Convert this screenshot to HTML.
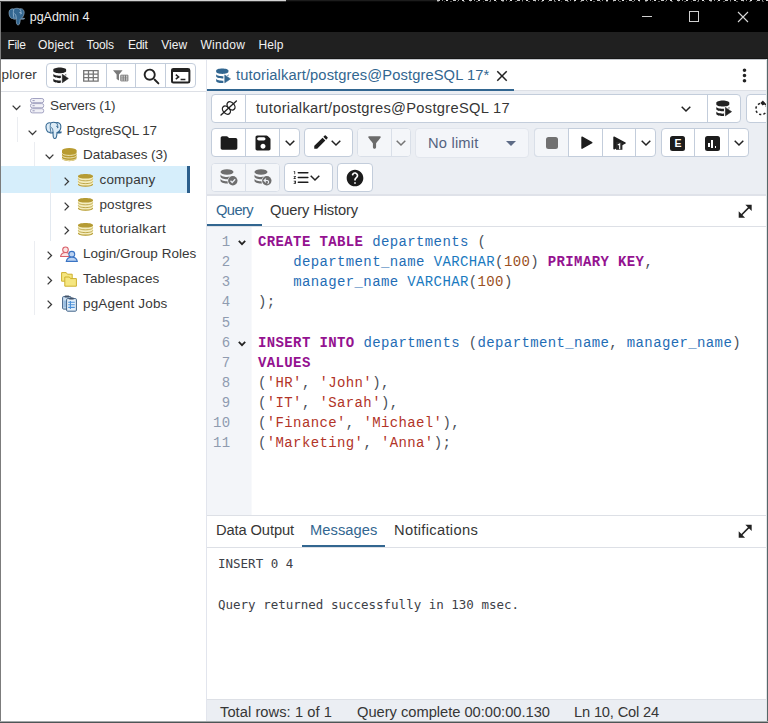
<!DOCTYPE html>
<html lang="en"><head><meta charset="utf-8"><title>pgAdmin 4</title>
<style>
html,body{margin:0;padding:0}
body{width:768px;height:723px;position:relative;overflow:hidden;background:#fff;font-family:"Liberation Sans",sans-serif}
.b{position:absolute;box-sizing:border-box}
.t{position:absolute;white-space:pre;display:block}
.ic{position:absolute;display:block;overflow:visible}
.btn{border:1px solid #c3cddb;background:#fff}
.dis{background:#ebeef3}
.code{position:absolute;white-space:pre;display:block;font-family:"Liberation Mono",monospace}
.k{color:#941290;font-weight:700}
.v{color:#1f6db5}
.n{color:#9a4f22}
.s{color:#b23428}
.p{color:#4a4f58}
.ty{color:#1a7ac0}

</style></head>
<body>
<div class="b" style="left:0px;top:0px;width:768px;height:1px;background:#d4d4d4"></div>
<div class="b" style="left:0px;top:1px;width:768px;height:1px;background:#3c3c3c"></div>
<div class="b" style="left:286px;top:0px;width:151px;height:1px;background:#1c1c1c"></div>
<div class="b" style="left:286px;top:1px;width:151px;height:1px;background:#080808"></div>
<div class="b" style="left:437px;top:0px;width:331px;height:2px;background:#000"></div>
<div class="b" style="left:437px;top:0px;width:331px;height:1px;background:repeating-linear-gradient(90deg,#c8c8c8 0 3px,#000 3px 5px,#999 5px 6px,#000 6px 9px,#ddd 9px 11px,#000 11px 16px)"></div>
<div class="b" style="left:437px;top:1px;width:331px;height:1px;background:repeating-linear-gradient(90deg,#555 0 2px,#000 2px 7px,#444 7px 8px,#000 8px 13px)"></div>
<div class="b" style="left:0px;top:2px;width:768px;height:30px;background:#000"></div>
<div class="b" style="left:0px;top:32px;width:768px;height:27px;background:#202020"></div>
<div class="b" style="left:0px;top:58px;width:768px;height:1px;background:#161616"></div>
<div class="b" style="left:1px;top:59px;width:766px;height:1px;background:#c4c7cb;z-index:40"></div>
<div class="b" style="left:0px;top:2px;width:1px;height:721px;background:#7c7c7c;z-index:50"></div>
<div class="b" style="left:766px;top:59px;width:1px;height:664px;background:#e3e6e7;z-index:50"></div>
<div class="b" style="left:767px;top:59px;width:1px;height:664px;background:#56676a;z-index:50"></div>
<div class="b" style="left:0px;top:721px;width:768px;height:1px;background:#a4a9aa;z-index:51"></div>
<div class="b" style="left:0px;top:722px;width:768px;height:1px;background:#4d5556;z-index:51"></div>
<svg class="ic" style="left:8px;top:8px;width:17px;height:17.3px" viewBox="0 0 17 17.300"><path fill="#336791" stroke="#9fb9cf" stroke-width=".600" d="M1 4.500C1 1.500 3.500.300 5.800 1 7.500.100 10 .100 11.500.800 13.500.200 16 1.200 16.200 4c.200 2.500-1.200 5.300-2.700 6.200l3 .100-.200.700c-1.500.400-3 .400-4 0-.100 2-.300 4-1 5.300-.800 1-2.300.700-2.700-.500-.400-1.500-.300-3.500-.400-5-1.200.700-2.700.500-3.700-.300C2.500 10.800 1 8 1 4.500z"/><path fill="none" stroke="#a9c6de" stroke-width=".700" d="M5.800 1.200C5 4 5.300 8 6.100 10.400M8.200 10.800c0-2.800-.500-4.600-1.800-5.200M11.300 4.600c1-.600 2.200-.100 2 1.300M11.500.900c1.500 1 2 3.500 1.200 5.500"/></svg>
<span class="t" style="left:29.7px;top:8px;font-size:12.5px;line-height:18px;color:#eee;font-family:'Liberation Sans', sans-serif;letter-spacing:-0.01px;">pgAdmin 4</span>
<div class="b" style="left:641.5px;top:16px;width:10.0px;height:1px;background:#d0d0d0"></div>
<div class="b" style="left:689px;top:11px;width:10px;height:10.5px;border:1px solid #d0d0d0"></div>
<svg class="ic" style="left:737.5px;top:11.5px;width:10px;height:10px" viewBox="0 0 10 10"><path d="M0 0L10 10M10 0L0 10" stroke="#d8d8d8" stroke-width="1.100" fill="none"/></svg>
<span class="t" style="left:7.4px;top:36.5px;font-size:12px;line-height:17px;color:#f2f2f2;font-family:'Liberation Sans', sans-serif;letter-spacing:-0.29px;">File</span>
<span class="t" style="left:38px;top:36.5px;font-size:12px;line-height:17px;color:#f2f2f2;font-family:'Liberation Sans', sans-serif;letter-spacing:0.19px;">Object</span>
<span class="t" style="left:86.5px;top:36.5px;font-size:12px;line-height:17px;color:#f2f2f2;font-family:'Liberation Sans', sans-serif;letter-spacing:-0.10px;">Tools</span>
<span class="t" style="left:128px;top:36.5px;font-size:12px;line-height:17px;color:#f2f2f2;font-family:'Liberation Sans', sans-serif;letter-spacing:-0.30px;">Edit</span>
<span class="t" style="left:161.3px;top:36.5px;font-size:12px;line-height:17px;color:#f2f2f2;font-family:'Liberation Sans', sans-serif;">View</span>
<span class="t" style="left:200.4px;top:36.5px;font-size:12px;line-height:17px;color:#f2f2f2;font-family:'Liberation Sans', sans-serif;letter-spacing:0.37px;">Window</span>
<span class="t" style="left:258.4px;top:36.5px;font-size:12px;line-height:17px;color:#f2f2f2;font-family:'Liberation Sans', sans-serif;letter-spacing:0.08px;">Help</span>
<div class="b" style="left:1px;top:59px;width:206px;height:664px;background:#fff"></div>
<div class="b" style="left:1px;top:91px;width:206px;height:1px;background:#dde0e6"></div>
<div class="b" style="left:206px;top:59px;width:1px;height:664px;background:#e2e5ed"></div>
<span class="t" style="left:1.5px;top:65px;font-size:13.5px;line-height:19px;color:#363636;font-family:'Liberation Sans', sans-serif;letter-spacing:0.16px;">plorer</span>
<div class="b" style="left:46px;top:63px;width:150px;height:25px;border:1px solid #c3cddb;border-radius:4px;background:#fff"></div>
<div class="b" style="left:76px;top:64px;width:1px;height:23px;background:#c3cddb"></div>
<div class="b" style="left:106px;top:64px;width:1px;height:23px;background:#c3cddb"></div>
<div class="b" style="left:135px;top:64px;width:1px;height:23px;background:#c3cddb"></div>
<div class="b" style="left:165px;top:64px;width:1px;height:23px;background:#c3cddb"></div>
<svg class="ic" style="left:51px;top:65.8px;width:18.2px;height:18.2px" viewBox="0 0 24 24"><path fill="#222" d="M3 5v1.700c0 1.700 3.800 3 8.500 3s8.500-1.300 8.500-3V5c0-1.700-3.800-3-8.500-3S3 3.300 3 5z"/><path fill="#222" d="M3 9.800v3.200c0 1.700 3.800 3 8.500 3 .500 0 1 0 1.500-.050v-3.200c-.500.030-1 .050-1.500.050-4.700 0-8.500-1.300-8.500-3z"/><path fill="#222" d="M3 16.100v3.200c0 1.700 3.800 3 8.500 3 .500 0 1 0 1.500-.050v-3.200c-.500.030-1 .050-1.500.050-4.700 0-8.500-1.300-8.500-3z"/><path fill="#222" d="M20 9.800c0 .700-.700 1.400-1.800 1.900l1.800 1.100z"/><path fill="#222" stroke="#222" stroke-width=".800" stroke-linejoin="round" d="M14.900 11v11l8-5.500z"/></svg>
<svg class="ic" style="left:83.3px;top:70px;width:15.8px;height:11.8px" viewBox="0 0 15.800 11.800"><path fill="none" stroke="#757575" stroke-width="1.300" d="M.700 .700h14.400v10.400H.700zM.700 4.200h14.400M.700 7.600h14.400M5.500 .700v10.400M10.300 .700v10.400"/></svg>
<svg class="ic" style="left:113.3px;top:70.4px;width:15.4px;height:11.4px" viewBox="0 0 15.400 11.400"><path fill="#7a7a7a" d="M0 .200h9.600L6 4.600v5.800L3.600 9V4.600z"/><path fill="none" stroke="#7a7a7a" stroke-width="1" d="M7.800 5.200h7.100v5.700H7.800zM7.800 7.100h7.100M7.800 9h7.100M10.200 5.200v5.700M12.500 5.200v5.700"/></svg>
<svg class="ic" style="left:140.7px;top:65.8px;width:22px;height:22px" viewBox="0 0 24 24"><path fill="#222" d="M15.5 14h-.79l-.28-.27c1.2-1.4 1.820-3.310 1.480-5.340-.47-2.780-2.790-5-5.590-5.340-4.230-.520-7.790 3.040-7.270 7.270.34 2.800 2.560 5.120 5.340 5.590 2.030.34 3.940-.28 5.340-1.480l.27.28v.79l4.250 4.250c.41.410 1.080.410 1.490 0 .41-.410.410-1.080 0-1.490L15.500 14zm-6 0C7.010 14 5 11.990 5 9.500S7.010 5 9.500 5 14 7.010 14 9.500 11.990 14 9.500 14z"/></svg>
<svg class="ic" style="left:171px;top:68px;width:19.4px;height:15.4px" viewBox="0 0 19.400 15.400"><rect x="1" y="1" width="17.400" height="13.400" rx="1.500" fill="none" stroke="#222" stroke-width="2"/><path d="M1 1h17.400v3H1z" fill="#222"/><path d="M4.800 6.700l2.800 2.200-2.800 2.200M9.600 11.600h4.800" fill="none" stroke="#222" stroke-width="1.500"/></svg>
<div class="b" style="left:1px;top:166px;width:189px;height:27px;background:#d6eefb"></div>
<div class="b" style="left:187px;top:166px;width:3px;height:27px;background:#2c5f8c"></div>
<div class="b" style="left:17px;top:117px;width:1px;height:25px;background:#ebedf1"></div>
<div class="b" style="left:34px;top:142px;width:1px;height:24px;background:#ebedf1"></div>
<div class="b" style="left:34px;top:241px;width:1px;height:74px;background:#ebedf1"></div>
<div class="b" style="left:50px;top:166px;width:1px;height:75px;background:#e3e9f0"></div>
<svg class="ic" style="left:12.0px;top:104.8px;width:9.0px;height:5.58px" viewBox="0 0 10 6.200"><path d="M.700 .700L5 5 9.300 .700" fill="none" stroke="#3a3a3a" stroke-width="1.45"/></svg>
<svg class="ic" style="left:29.7px;top:98.0px;width:14.2px;height:15.4px" viewBox="0 0 14.200 15.400"><g fill="#f1f1f7" stroke="#a3a3c2" stroke-width="1"><rect x=".500" y=".500" width="13.200" height="4.200" rx="1.800"/><rect x=".500" y="5.600" width="13.200" height="4.200" rx="1.800"/><rect x=".500" y="10.700" width="13.200" height="4.200" rx="1.800"/></g><path d="M2.500 2.600h2.200M2.500 7.700h2.200M2.500 12.800h2.200" stroke="#8f8fb3" stroke-width=".900"/></svg>
<span class="t" style="left:50px;top:95.9px;font-size:13.5px;line-height:19px;color:#383838;font-family:'Liberation Sans', sans-serif;letter-spacing:-0.12px;">Servers (1)</span>
<svg class="ic" style="left:28.2px;top:129.5px;width:9.0px;height:5.58px" viewBox="0 0 10 6.200"><path d="M.700 .700L5 5 9.300 .700" fill="none" stroke="#3a3a3a" stroke-width="1.45"/></svg>
<svg class="ic" style="left:44.5px;top:121.6px;width:16.6px;height:16.9px" viewBox="0 0 17 17.300"><path fill="#dcebf6" stroke="#336791" stroke-width="1.100" d="M1 4.500C1 1.500 3.500.300 5.800 1 7.500.100 10 .100 11.500.800 13.500.200 16 1.200 16.200 4c.200 2.500-1.200 5.300-2.700 6.200l3 .100-.200.700c-1.500.400-3 .400-4 0-.100 2-.300 4-1 5.300-.800 1-2.300.700-2.700-.500-.400-1.500-.300-3.500-.400-5-1.200.700-2.700.500-3.700-.300C2.500 10.800 1 8 1 4.500z"/><path fill="none" stroke="#336791" stroke-width=".900" d="M5.800 1.200C5 4 5.300 8 6.100 10.400M8.200 10.800c0-2.800-.500-4.600-1.800-5.200M11.300 4.600c1-.600 2.200-.100 2 1.300M11.500.900c1.500 1 2 3.500 1.200 5.500"/></svg>
<span class="t" style="left:66.5px;top:120.6px;font-size:13.5px;line-height:19px;color:#383838;font-family:'Liberation Sans', sans-serif;letter-spacing:-0.10px;">PostgreSQL 17</span>
<svg class="ic" style="left:44.5px;top:154.2px;width:9.0px;height:5.58px" viewBox="0 0 10 6.200"><path d="M.700 .700L5 5 9.300 .700" fill="none" stroke="#3a3a3a" stroke-width="1.45"/></svg>
<svg class="ic" style="left:62px;top:148.20000000000002px;width:14.6px;height:13.2px" viewBox="0 0 14.600 13.200"><path fill="#b89b30" d="M0 2.600v8C0 12.100 3.300 13.200 7.300 13.200s7.300-1.100 7.300-2.600v-8z"/><ellipse cx="7.300" cy="2.700" rx="7.300" ry="2.700" fill="#b89b30"/><path fill="none" stroke="#f4edc4" stroke-width=".900" d="M0 5c0 1.400 3.300 2.400 7.300 2.400S14.600 6.400 14.600 5M0 7.500c0 1.400 3.300 2.400 7.300 2.400s7.300-1 7.300-2.400M0 10c0 1.400 3.300 2.400 7.300 2.400s7.300-1 7.300-2.400"/></svg>
<span class="t" style="left:83px;top:145.3px;font-size:13.5px;line-height:19px;color:#383838;font-family:'Liberation Sans', sans-serif;letter-spacing:-0.02px;">Databases (3)</span>
<svg class="ic" style="left:63.6px;top:176.8px;width:5.58px;height:9.0px" viewBox="0 0 6.200 10"><path d="M.700 .700L5 5 .700 9.300" fill="none" stroke="#3a3a3a" stroke-width="1.45"/></svg>
<svg class="ic" style="left:78.3px;top:173.5px;width:15px;height:13px" viewBox="0 0 15 13"><path fill="#f4edbf" d="M0 2.300v7.800c0 1.500 3.400 2.600 7.500 2.600s7.500-1.100 7.500-2.600V2.300z"/><path fill="#b59b34" d="M0 2.100v.300c0 1.200 3.400 2.100 7.500 2.100s7.500-.900 7.500-2.100v-.300C15 .900 11.600 0 7.500 0S0 .900 0 2.100z"/><path fill="none" stroke="#b59b34" stroke-width=".850" d="M.300 4.700c0 1.200 3.300 2.100 7.200 2.100s7.200-.900 7.200-2.100M.300 7.500c0 1.200 3.300 2.100 7.200 2.100s7.200-.900 7.200-2.100"/><path fill="none" stroke="#b59b34" stroke-width="1.200" d="M.500 10c0 1.200 3.100 2.100 7 2.100s7-.900 7-2.100"/></svg>
<span class="t" style="left:99.5px;top:170px;font-size:13.5px;line-height:19px;color:#383838;font-family:'Liberation Sans', sans-serif;letter-spacing:0.17px;">company</span>
<svg class="ic" style="left:63.6px;top:201.5px;width:5.58px;height:9.0px" viewBox="0 0 6.200 10"><path d="M.700 .700L5 5 .700 9.300" fill="none" stroke="#3a3a3a" stroke-width="1.45"/></svg>
<svg class="ic" style="left:78.3px;top:198.2px;width:15px;height:13px" viewBox="0 0 15 13"><path fill="#f4edbf" d="M0 2.300v7.800c0 1.500 3.400 2.600 7.500 2.600s7.500-1.100 7.500-2.600V2.300z"/><path fill="#b59b34" d="M0 2.100v.300c0 1.200 3.400 2.100 7.500 2.100s7.500-.900 7.500-2.100v-.300C15 .900 11.600 0 7.500 0S0 .900 0 2.100z"/><path fill="none" stroke="#b59b34" stroke-width=".850" d="M.300 4.700c0 1.200 3.300 2.100 7.200 2.100s7.200-.900 7.200-2.100M.300 7.500c0 1.200 3.300 2.100 7.200 2.100s7.200-.900 7.200-2.100"/><path fill="none" stroke="#b59b34" stroke-width="1.200" d="M.500 10c0 1.200 3.100 2.100 7 2.100s7-.900 7-2.100"/></svg>
<span class="t" style="left:99.5px;top:194.7px;font-size:13.5px;line-height:19px;color:#383838;font-family:'Liberation Sans', sans-serif;letter-spacing:0.09px;">postgres</span>
<svg class="ic" style="left:63.6px;top:226.2px;width:5.58px;height:9.0px" viewBox="0 0 6.200 10"><path d="M.700 .700L5 5 .700 9.300" fill="none" stroke="#3a3a3a" stroke-width="1.45"/></svg>
<svg class="ic" style="left:78.3px;top:222.9px;width:15px;height:13px" viewBox="0 0 15 13"><path fill="#f4edbf" d="M0 2.300v7.800c0 1.500 3.400 2.600 7.500 2.600s7.500-1.100 7.500-2.600V2.300z"/><path fill="#b59b34" d="M0 2.100v.300c0 1.200 3.400 2.100 7.500 2.100s7.500-.900 7.500-2.100v-.300C15 .900 11.600 0 7.500 0S0 .900 0 2.100z"/><path fill="none" stroke="#b59b34" stroke-width=".850" d="M.300 4.700c0 1.200 3.300 2.100 7.200 2.100s7.200-.900 7.200-2.100M.300 7.500c0 1.200 3.300 2.100 7.200 2.100s7.200-.900 7.200-2.100"/><path fill="none" stroke="#b59b34" stroke-width="1.200" d="M.500 10c0 1.200 3.100 2.100 7 2.100s7-.900 7-2.100"/></svg>
<span class="t" style="left:99.5px;top:219.4px;font-size:13.5px;line-height:19px;color:#383838;font-family:'Liberation Sans', sans-serif;letter-spacing:0.29px;">tutorialkart</span>
<svg class="ic" style="left:47.1px;top:250.9px;width:5.58px;height:9.0px" viewBox="0 0 6.200 10"><path d="M.700 .700L5 5 .700 9.300" fill="none" stroke="#3a3a3a" stroke-width="1.45"/></svg>
<svg class="ic" style="left:60.3px;top:245.7px;width:18px;height:16px" viewBox="0 0 18 16"><circle cx="5.500" cy="3.800" r="2.800" fill="#fbe4e4" stroke="#d9606a" stroke-width="1.100"/><path d="M.600 10.500c.500-3 2.500-4 4.900-4s4.400 1 4.900 4z" fill="#fbe4e4" stroke="#d9606a" stroke-width="1.100"/><circle cx="11.800" cy="8.300" r="2.900" fill="#bcd3f2" stroke="#3a74c4" stroke-width="1.100"/><path d="M6.300 15.400c.500-3.200 2.800-4.300 5.500-4.300s5 1.100 5.500 4.300z" fill="#bcd3f2" stroke="#3a74c4" stroke-width="1.100"/></svg>
<span class="t" style="left:83px;top:244.1px;font-size:13.5px;line-height:19px;color:#383838;font-family:'Liberation Sans', sans-serif;letter-spacing:0.05px;">Login/Group Roles</span>
<svg class="ic" style="left:47.1px;top:275.6px;width:5.58px;height:9.0px" viewBox="0 0 6.200 10"><path d="M.700 .700L5 5 .700 9.300" fill="none" stroke="#3a3a3a" stroke-width="1.45"/></svg>
<svg class="ic" style="left:61.3px;top:270.6px;width:16px;height:16px" viewBox="0 0 16 16"><path d="M.600 1.600h4.600l1.200 1.600h4.800v7H.600z" fill="#f5e680" stroke="#cdb02e" stroke-width="1"/><path d="M3.800 6h4.600l1.200 1.600h5.800v7.600H3.800z" fill="#f5e680" stroke="#cdb02e" stroke-width="1"/></svg>
<span class="t" style="left:83px;top:268.8px;font-size:13.5px;line-height:19px;color:#383838;font-family:'Liberation Sans', sans-serif;letter-spacing:0.13px;">Tablespaces</span>
<svg class="ic" style="left:47.1px;top:300.3px;width:5.58px;height:9.0px" viewBox="0 0 6.200 10"><path d="M.700 .700L5 5 .700 9.300" fill="none" stroke="#3a3a3a" stroke-width="1.45"/></svg>
<svg class="ic" style="left:62px;top:294.5px;width:15px;height:17px" viewBox="0 0 15 17"><rect x=".600" y="1.600" width="8.500" height="12.500" rx="1" fill="#cfe2f3" stroke="#3f6287" stroke-width="1"/><path d="M2.200 5.500v7M3.800 5.500v7" stroke="#6f9fd0" stroke-width=".800"/><rect x="4.600" y="3.600" width="9.800" height="12.600" rx="1" fill="#e4f0fa" stroke="#3f6287" stroke-width="1"/><path d="M6.200 7.200h6.600M6.200 9.800h6.600M6.200 12.400h6.600M8.400 6v8" stroke="#4a90d9" stroke-width="1.100" fill="none"/><rect x="2.700" y=".400" width="4.500" height="2.200" rx=".600" fill="#44546a"/><rect x="7.200" y="2.600" width="4.500" height="2" rx=".600" fill="#44546a"/></svg>
<span class="t" style="left:83px;top:293.5px;font-size:13.5px;line-height:19px;color:#383838;font-family:'Liberation Sans', sans-serif;letter-spacing:0.16px;">pgAgent Jobs</span>
<div class="b" style="left:207px;top:59px;width:559px;height:32px;background:#fff"></div>
<div class="b" style="left:207px;top:89px;width:307px;height:2px;background:#326690"></div>
<div class="b" style="left:514px;top:90px;width:252px;height:1px;background:#dde0e6"></div>
<svg class="ic" style="left:213.9px;top:66.6px;width:17.3px;height:17.3px" viewBox="0 0 24 24"><path fill="#326690" d="M3 5v1.700c0 1.700 3.800 3 8.500 3s8.500-1.300 8.500-3V5c0-1.700-3.800-3-8.500-3S3 3.300 3 5z"/><path fill="#326690" d="M3 9.800v3.200c0 1.700 3.800 3 8.500 3 .500 0 1 0 1.500-.050v-3.200c-.500.030-1 .050-1.500.050-4.700 0-8.500-1.300-8.500-3z"/><path fill="#326690" d="M3 16.100v3.200c0 1.700 3.800 3 8.500 3 .500 0 1 0 1.500-.050v-3.200c-.500.030-1 .050-1.500.050-4.700 0-8.500-1.300-8.500-3z"/><path fill="#326690" d="M20 9.800c0 .700-.700 1.400-1.800 1.900l1.800 1.100z"/><path fill="#326690" stroke="#326690" stroke-width=".800" stroke-linejoin="round" d="M14.900 11v11l8-5.500z"/></svg>
<span class="t" style="left:236px;top:65px;font-size:14.7px;line-height:21px;color:#326690;font-family:'Liberation Sans', sans-serif;letter-spacing:0.11px;">tutorialkart/postgres@PostgreSQL 17*</span>
<svg class="ic" style="left:493px;top:66.5px;width:18px;height:18px" viewBox="0 0 24 24"><path fill="#222" d="M19 6.410 17.590 5 12 10.590 6.410 5 5 6.410 10.590 12 5 17.590 6.410 19 12 13.410 17.590 19 19 17.590 13.410 12z"/></svg>
<svg class="ic" style="left:733.5px;top:65px;width:21px;height:21px" viewBox="0 0 24 24"><path fill="#222" d="M12 8c1.1 0 2-.9 2-2s-.9-2-2-2-2 .9-2 2 .9 2 2 2zm0 2c-1.1 0-2 .9-2 2s.9 2 2 2 2-.9 2-2-.9-2-2-2zm0 6c-1.1 0-2 .9-2 2s.9 2 2 2 2-.9 2-2-.9-2-2-2z"/></svg>
<div class="b" style="left:207px;top:91px;width:559px;height:105px;background:#ebeef3"></div>
<div class="b" style="left:207px;top:194px;width:559px;height:2px;background:#dfe2e9"></div>
<div class="b" style="left:211px;top:94px;width:530px;height:29px;border:1px solid #c3cddb;border-radius:4px;background:#fff"></div>
<div class="b" style="left:245px;top:95px;width:1px;height:27px;background:#c3cddb"></div>
<div class="b" style="left:707px;top:95px;width:1px;height:27px;background:#c3cddb"></div>
<svg class="ic" style="left:219.7px;top:100.3px;width:17.4px;height:16px" viewBox="0 0 17.400 16"><g fill="none" stroke="#222" stroke-width="1.350" stroke-linecap="round"><path d="M1 15L16.400 1"/><ellipse cx="6.400" cy="10.100" rx="3.300" ry="4.700" transform="rotate(-43 6.400 10.100)"/><ellipse cx="11" cy="5.900" rx="3.300" ry="4.700" transform="rotate(-43 11 5.900)"/></g></svg>
<span class="t" style="left:256px;top:98px;font-size:14.7px;line-height:21px;color:#363636;font-family:'Liberation Sans', sans-serif;letter-spacing:0.29px;">tutorialkart/postgres@PostgreSQL 17</span>
<svg class="ic" style="left:680.5px;top:105.5px;width:10.0px;height:6.2px" viewBox="0 0 10 6.200"><path d="M.700 .700L5 5 9.300 .700" fill="none" stroke="#222" stroke-width="1.5"/></svg>
<svg class="ic" style="left:714.3px;top:98.9px;width:18.4px;height:18.4px" viewBox="0 0 24 24"><path fill="#222" d="M3 5v1.700c0 1.700 3.800 3 8.500 3s8.500-1.300 8.500-3V5c0-1.700-3.800-3-8.500-3S3 3.300 3 5z"/><path fill="#222" d="M3 9.800v3.200c0 1.700 3.800 3 8.500 3 .500 0 1 0 1.500-.050v-3.200c-.500.030-1 .050-1.500.050-4.700 0-8.500-1.300-8.500-3z"/><path fill="#222" d="M3 16.100v3.200c0 1.700 3.800 3 8.500 3 .500 0 1 0 1.500-.050v-3.200c-.500.030-1 .050-1.500.050-4.700 0-8.500-1.300-8.500-3z"/><path fill="#222" d="M20 9.800c0 .700-.700 1.400-1.800 1.900l1.800 1.100z"/><path fill="#222" stroke="#222" stroke-width=".800" stroke-linejoin="round" d="M14.900 11v11l8-5.500z"/></svg>
<div class="b" style="left:746px;top:94px;width:29px;height:29px;border:1px solid #c3cddb;border-radius:4px;background:#fff"></div>
<svg class="ic" style="left:754px;top:100px;width:16px;height:17px" viewBox="0 0 16 17"><circle cx="7.500" cy="9" r="5.600" fill="none" stroke="#222" stroke-width="1.500" stroke-dasharray="2.200 2.200"/><path d="M6.300 3l2.600-2.400 2.400 2.600-2.600 2.400z" fill="#222"/><path d="M9.500 3l3.500 2.300" stroke="#222" stroke-width="1.500"/></svg>
<div class="b" style="left:211px;top:128px;width:89px;height:29px;border:1px solid #c3cddb;border-radius:4px;background:#fff"></div>
<div class="b" style="left:245px;top:129px;width:1px;height:27px;background:#c3cddb"></div>
<div class="b" style="left:279px;top:129px;width:1px;height:27px;background:#c3cddb"></div>
<svg class="ic" style="left:218.7px;top:133px;width:20px;height:20px" viewBox="0 0 24 24"><path fill="#1c1c1c" d="M10.59 4.59C10.21 4.21 9.7 4 9.17 4H4c-1.1 0-1.99.9-1.99 2L2 18c0 1.1.9 2 2 2h16c1.1 0 2-.9 2-2V8c0-1.1-.9-2-2-2h-8l-1.41-1.41z"/></svg>
<svg class="ic" style="left:252.5px;top:133px;width:20px;height:20px" viewBox="0 0 24 24"><path fill="#1c1c1c" d="M17.59 3.59c-.38-.38-.89-.59-1.42-.59H5c-1.11 0-2 .9-2 2v14c0 1.1.9 2 2 2h14c1.1 0 2-.9 2-2V7.83c0-.53-.21-1.04-.59-1.41l-2.82-2.83zM12 19c-1.66 0-3-1.34-3-3s1.34-3 3-3 3 1.34 3 3-1.34 3-3 3zm1-10H7c-1.1 0-2-.9-2-2s.9-2 2-2h6c1.1 0 2 .9 2 2s-.9 2-2 2z"/></svg>
<svg class="ic" style="left:284.5px;top:139.9px;width:10.0px;height:6.2px" viewBox="0 0 10 6.200"><path d="M.700 .700L5 5 9.300 .700" fill="none" stroke="#222" stroke-width="1.5"/></svg>
<div class="b" style="left:304px;top:128px;width:49px;height:29px;border:1px solid #c3cddb;border-radius:4px;background:#fff"></div>
<svg class="ic" style="left:312px;top:133px;width:18px;height:18px" viewBox="0 0 24 24"><path fill="#1c1c1c" d="M3 17.46v3.04c0 .28.22.5.5.5h3.04c.13 0 .26-.05.35-.15L17.81 9.94l-3.75-3.75L3.15 17.1c-.1.1-.15.22-.15.36zM20.71 7.04c.39-.39.39-1.02 0-1.41l-2.34-2.34a.996.996 0 0 0-1.41 0l-1.83 1.83 3.75 3.75 1.83-1.830z"/></svg>
<svg class="ic" style="left:330.6px;top:139.9px;width:10.0px;height:6.2px" viewBox="0 0 10 6.200"><path d="M.700 .700L5 5 9.300 .700" fill="none" stroke="#222" stroke-width="1.5"/></svg>
<div class="b" style="left:357px;top:128px;width:54px;height:29px;border:1px solid #d9dfe8;border-radius:4px;background:#fff"></div>
<div class="b" style="left:358px;top:129px;width:33px;height:27px;background:#f4f6f9;border-top-left-radius:3px;border-bottom-left-radius:3px;"></div>
<div class="b" style="left:392px;top:129px;width:18px;height:27px;background:#f4f6f9;border-top-right-radius:3px;border-bottom-right-radius:3px;"></div>
<div class="b" style="left:391px;top:129px;width:1px;height:27px;background:#d9dfe8"></div>
<svg class="ic" style="left:364.5px;top:133px;width:19px;height:19px" viewBox="0 0 24 24"><path fill="#6b6b6b" d="M4.25 5.61C6.57 8.59 10 13 10 13v5c0 1.1.9 2 2 2s2-.9 2-2v-5s3.43-4.41 5.75-7.39c.51-.66.04-1.61-.8-1.61H5.04c-.83 0-1.3.95-.79 1.61z"/></svg>
<svg class="ic" style="left:396.0px;top:139.9px;width:10.0px;height:6.2px" viewBox="0 0 10 6.200"><path d="M.700 .700L5 5 9.300 .700" fill="none" stroke="#757575" stroke-width="1.5"/></svg>
<div class="b" style="left:415px;top:128px;width:114px;height:30px;border:1px solid #e2e6ed;border-radius:4px;background:#f3f5f9"></div>
<span class="t" style="left:428px;top:132.5px;font-size:14.7px;line-height:21px;color:#55637f;font-family:'Liberation Sans', sans-serif;letter-spacing:0.19px;">No limit</span>
<svg class="ic" style="left:506px;top:141px;width:10px;height:5px" viewBox="0 0 10 5"><path d="M0 0h10L5 5z" fill="#5d6b86"/></svg>
<div class="b" style="left:534px;top:128px;width:122px;height:29px;border:1px solid #c3cddb;border-radius:4px;background:#fff"></div>
<div class="b" style="left:535px;top:129px;width:33px;height:27px;background:#f4f6f9;border-top-left-radius:3px;border-bottom-left-radius:3px;"></div>
<div class="b" style="left:568px;top:129px;width:1px;height:27px;background:#c3cddb"></div>
<div class="b" style="left:602px;top:129px;width:1px;height:27px;background:#c3cddb"></div>
<div class="b" style="left:635px;top:129px;width:1px;height:27px;background:#c3cddb"></div>
<div class="b" style="left:534px;top:128px;width:34px;height:29px;border:1px solid #d9dfe8;border-right:none;border-radius:4px 0 0 4px"></div>
<div class="b" style="left:545.5px;top:136.5px;width:12.5px;height:12.5px;background:#717171;border-radius:2.500px"></div>
<svg class="ic" style="left:581px;top:136.3px;width:12px;height:13.4px" viewBox="0 0 12 13.400"><path d="M1 1.200L10.800 6.700 1 12.200z" fill="#1c1c1c" stroke="#1c1c1c" stroke-width="1.400" stroke-linejoin="round"/></svg>
<svg class="ic" style="left:613.3px;top:135.8px;width:13.4px;height:14px" viewBox="0 0 13.400 14"><path d="M1 1.200L12.200 7 1 12.800z" fill="#1c1c1c" stroke="#1c1c1c" stroke-width="1.400" stroke-linejoin="round"/></svg>
<svg class="ic" style="left:615.6px;top:142px;width:6.4px;height:7.8px" viewBox="0 0 6.400 7.800"><rect width="6.400" height="7.800" fill="#2a2a2a"/><path d="M1.800 3l1.900-1.100v5.300" stroke="#fff" stroke-width="1.150" fill="none"/></svg>
<svg class="ic" style="left:641.0px;top:139.9px;width:10.0px;height:6.2px" viewBox="0 0 10 6.200"><path d="M.700 .700L5 5 9.300 .700" fill="none" stroke="#222" stroke-width="1.5"/></svg>
<div class="b" style="left:661px;top:128px;width:88px;height:29px;border:1px solid #c3cddb;border-radius:4px;background:#fff"></div>
<div class="b" style="left:694px;top:129px;width:1px;height:27px;background:#c3cddb"></div>
<div class="b" style="left:728px;top:129px;width:1px;height:27px;background:#c3cddb"></div>
<div class="b" style="left:670.2px;top:136px;width:14.799999999999955px;height:14.5px;background:#1c1c1c;border-radius:2.500px"></div>
<span class="t" style="left:674.6px;top:135.8px;font-size:10.5px;line-height:15px;color:#fff;font-family:'Liberation Sans', sans-serif;font-weight:700;">E</span>
<div class="b" style="left:705px;top:136px;width:14.5px;height:14.5px;background:#1c1c1c;border-radius:2.500px"></div>
<div class="b" style="left:708.3px;top:142.8px;width:1.7000000000000455px;height:4.699999999999989px;background:#fff"></div>
<div class="b" style="left:711.4px;top:139.5px;width:1.7000000000000455px;height:8.0px;background:#fff"></div>
<div class="b" style="left:714.5px;top:145.5px;width:1.7000000000000455px;height:2.0px;background:#fff"></div>
<svg class="ic" style="left:733.5px;top:139.9px;width:10.0px;height:6.2px" viewBox="0 0 10 6.200"><path d="M.700 .700L5 5 9.300 .700" fill="none" stroke="#222" stroke-width="1.5"/></svg>
<div class="b" style="left:211px;top:163px;width:69px;height:29px;border:1px solid #d9dfe8;border-radius:4px;background:#fff"></div>
<div class="b" style="left:212px;top:164px;width:33px;height:27px;background:#f4f6f9;border-top-left-radius:3px;border-bottom-left-radius:3px;"></div>
<div class="b" style="left:246px;top:164px;width:33px;height:27px;background:#f4f6f9;border-top-right-radius:3px;border-bottom-right-radius:3px;"></div>
<div class="b" style="left:245px;top:164px;width:1px;height:27px;background:#d9dfe8"></div>
<svg class="ic" style="left:220px;top:169px;width:18px;height:17px" viewBox="0 0 18 17"><ellipse cx="7" cy="3" rx="6.500" ry="2.800" fill="#6e6e6e"/><path fill="#6e6e6e" d="M.500 5.200c0 1.500 2.900 2.700 6.500 2.700 1 0 2-.100 2.800-.300-1 .700-1.700 1.600-2 2.600H7C3.400 10.200.500 9 .500 7.500zM.500 9.500c0 1.500 2.900 2.700 6.500 2.700h.500c0 .800.200 1.600.600 2.300H7C3.400 14.500.500 13.300.500 11.800z"/><circle cx="12.800" cy="11.800" r="4.700" fill="#6e6e6e"/></svg>
<svg class="ic" style="left:220px;top:169px;width:18px;height:17px" viewBox="0 0 18 17"><path d="M10.500 11.800l1.700 1.700 3-3.200" fill="none" stroke="#ebeef3" stroke-width="1.300"/></svg>
<svg class="ic" style="left:254px;top:169px;width:18px;height:17px" viewBox="0 0 18 17"><ellipse cx="7" cy="3" rx="6.500" ry="2.800" fill="#6e6e6e"/><path fill="#6e6e6e" d="M.500 5.200c0 1.500 2.900 2.700 6.500 2.700 1 0 2-.100 2.800-.300-1 .700-1.700 1.600-2 2.600H7C3.400 10.200.500 9 .500 7.500zM.500 9.500c0 1.500 2.900 2.700 6.500 2.700h.500c0 .800.200 1.600.600 2.300H7C3.400 14.500.500 13.300.500 11.800z"/><circle cx="12.800" cy="11.800" r="4.700" fill="#6e6e6e"/></svg>
<svg class="ic" style="left:254px;top:169px;width:18px;height:17px" viewBox="0 0 18 17"><path d="M10.300 11.500h3.200a1.700 1.700 0 0 1 0 3.200M12 9.600l-1.900 1.900 1.900 1.900" fill="none" stroke="#ebeef3" stroke-width="1.200"/></svg>
<div class="b" style="left:284px;top:163px;width:49px;height:29px;border:1px solid #c3cddb;border-radius:4px;background:#fff"></div>
<svg class="ic" style="left:292px;top:168px;width:19px;height:19px" viewBox="0 0 24 24"><path fill="#1c1c1c" d="M8 7h12c.55 0 1-.45 1-1s-.45-1-1-1H8c-.55 0-1 .45-1 1s.45 1 1 1zm12 10H8c-.55 0-1 .45-1 1s.45 1 1 1h12c.55 0 1-.45 1-1s-.45-1-1-1zm0-6H8c-.55 0-1 .45-1 1s.45 1 1 1h12c.55 0 1-.45 1-1s-.45-1-1-1zM4.500 16h-2c-.28 0-.5.220-.5.500s.22.500.5.500H4v.500h-.5c-.280 0-.500.220-.500.500s.220.500.500.500H4v.500H2.500c-.280 0-.500.220-.500.500s.220.500.500.500h2c.280 0 .500-.220.500-.500v-3c0-.280-.220-.500-.500-.500zm-2-11H3v2.500c0 .280.220.500.500.500s.500-.220.500-.500v-3c0-.280-.220-.500-.500-.500h-1c-.280 0-.500.220-.500.500s.220.500.500.500zm2 5.500c0-.280-.220-.500-.500-.500H2.500c-.280 0-.500.220-.500.500s.220.500.500.500h1.300l-1.680 1.960c-.08.090-.12.210-.12.320v.220c0 .280.220.500.500.500h2c.280 0 .500-.220.500-.500s-.220-.500-.500-.500H3.200l1.680-1.960c.080-.09.120-.21.120-.320v-.22z"/></svg>
<svg class="ic" style="left:310.3px;top:174.9px;width:10.0px;height:6.2px" viewBox="0 0 10 6.200"><path d="M.700 .700L5 5 9.300 .700" fill="none" stroke="#222" stroke-width="1.5"/></svg>
<div class="b" style="left:337px;top:163px;width:36px;height:29px;border:1px solid #c3cddb;border-radius:4px;background:#fff"></div>
<svg class="ic" style="left:345.1px;top:167.5px;width:20px;height:20px" viewBox="0 0 24 24"><path fill="#1c1c1c" d="M12 2C6.48 2 2 6.48 2 12s4.48 10 10 10 10-4.480 10-10S17.520 2 12 2zm1 17h-2v-2h2v2zm2.070-7.750-.9.920c-.5.510-.860.970-1.040 1.690-.080.320-.130.680-.130 1.140h-2v-.500c0-.460.080-.900.220-1.310.200-.580.530-1.100.950-1.520l1.240-1.260c.460-.440.680-1.100.550-1.800-.130-.720-.690-1.330-1.390-1.530-1.110-.310-2.140.320-2.470 1.270-.120.370-.430.650-.820.650h-.300C8.400 9 8 8.440 8.160 7.880c.430-1.470 1.680-2.590 3.230-2.830 1.520-.240 2.970.550 3.870 1.800 1.180 1.630.830 3.380-.190 4.400z"/></svg>
<div class="b" style="left:207px;top:196px;width:559px;height:31px;background:#fff"></div>
<div class="b" style="left:207px;top:226px;width:559px;height:1px;background:#dde0e6"></div>
<div class="b" style="left:207px;top:224px;width:55px;height:2px;background:#326690"></div>
<span class="t" style="left:216px;top:200px;font-size:14.7px;line-height:21px;color:#326690;font-family:'Liberation Sans', sans-serif;letter-spacing:-0.60px;">Query</span>
<span class="t" style="left:270px;top:200px;font-size:14.7px;line-height:21px;color:#363636;font-family:'Liberation Sans', sans-serif;letter-spacing:-0.14px;">Query History</span>
<svg class="ic" style="left:737.3px;top:203.2px;width:16.4px;height:16.4px" viewBox="0 0 24 24"><path d="M5 19L19 5" stroke="#222" stroke-width="2.300" fill="none"/><path d="M21.500 2.500v9.300l-9.300-9.300zM2.500 21.500v-9.300l9.300 9.300z" fill="#222"/></svg>
<div class="b" style="left:207px;top:227px;width:559px;height:288px;background:#fff"></div>
<div class="b" style="left:207px;top:227px;width:44px;height:288px;background:#f3f5f9"></div>
<div class="b" style="left:251px;top:227px;width:1px;height:288px;background:#f8f9fb"></div>
<span class="code" style="left:198.500px;width:32px;text-align:right;top:231.5px;font-size:14px;line-height:20px;letter-spacing:.360px;color:#8f9bb0">1</span>
<span class="code" style="left:198.500px;width:32px;text-align:right;top:251.5px;font-size:14px;line-height:20px;letter-spacing:.360px;color:#8f9bb0">2</span>
<span class="code" style="left:198.500px;width:32px;text-align:right;top:271.5px;font-size:14px;line-height:20px;letter-spacing:.360px;color:#8f9bb0">3</span>
<span class="code" style="left:198.500px;width:32px;text-align:right;top:291.5px;font-size:14px;line-height:20px;letter-spacing:.360px;color:#8f9bb0">4</span>
<span class="code" style="left:198.500px;width:32px;text-align:right;top:312.5px;font-size:14px;line-height:20px;letter-spacing:.360px;color:#8f9bb0">5</span>
<span class="code" style="left:198.500px;width:32px;text-align:right;top:332.5px;font-size:14px;line-height:20px;letter-spacing:.360px;color:#8f9bb0">6</span>
<span class="code" style="left:198.500px;width:32px;text-align:right;top:352.5px;font-size:14px;line-height:20px;letter-spacing:.360px;color:#8f9bb0">7</span>
<span class="code" style="left:198.500px;width:32px;text-align:right;top:372.5px;font-size:14px;line-height:20px;letter-spacing:.360px;color:#8f9bb0">8</span>
<span class="code" style="left:198.500px;width:32px;text-align:right;top:392.5px;font-size:14px;line-height:20px;letter-spacing:.360px;color:#8f9bb0">9</span>
<span class="code" style="left:198.500px;width:32px;text-align:right;top:412.5px;font-size:14px;line-height:20px;letter-spacing:.360px;color:#8f9bb0">10</span>
<span class="code" style="left:198.500px;width:32px;text-align:right;top:432.5px;font-size:14px;line-height:20px;letter-spacing:.360px;color:#8f9bb0">11</span>
<svg class="ic" style="left:238.2px;top:239.7px;width:8px;height:6px" viewBox="0 0 8 6"><path d="M.800 .800L4 4.200 7.200 .800" fill="none" stroke="#222" stroke-width="1.700"/></svg>
<svg class="ic" style="left:238.2px;top:340.7px;width:8px;height:6px" viewBox="0 0 8 6"><path d="M.800 .800L4 4.200 7.200 .800" fill="none" stroke="#222" stroke-width="1.700"/></svg>
<span class="code" style="left:258px;top:231.5px;font-size:14px;line-height:20px;letter-spacing:0.379px"><span class="k">CREATE TABLE</span> <span class="v">departments</span> <span class="p">(</span></span>
<span class="code" style="left:258px;top:251.5px;font-size:14px;line-height:20px;letter-spacing:0.379px">    <span class="v">department_name</span> <span class="ty">VARCHAR</span><span class="p">(</span><span class="n">100</span><span class="p">)</span> <span class="k">PRIMARY KEY</span><span class="p">,</span></span>
<span class="code" style="left:258px;top:271.5px;font-size:14px;line-height:20px;letter-spacing:0.379px">    <span class="v">manager_name</span> <span class="ty">VARCHAR</span><span class="p">(</span><span class="n">100</span><span class="p">)</span></span>
<span class="code" style="left:258px;top:291.5px;font-size:14px;line-height:20px;letter-spacing:0.379px"><span class="p">);</span></span>
<span class="code" style="left:258px;top:332.5px;font-size:14px;line-height:20px;letter-spacing:0.379px"><span class="k">INSERT INTO</span> <span class="v">departments</span> <span class="p">(</span><span class="v">department_name</span><span class="p">,</span> <span class="v">manager_name</span><span class="p">)</span></span>
<span class="code" style="left:258px;top:352.5px;font-size:14px;line-height:20px;letter-spacing:0.379px"><span class="k">VALUES</span></span>
<span class="code" style="left:258px;top:372.5px;font-size:14px;line-height:20px;letter-spacing:0.379px"><span class="p">(</span><span class="s">'HR'</span><span class="p">,</span> <span class="s">'John'</span><span class="p">),</span></span>
<span class="code" style="left:258px;top:392.5px;font-size:14px;line-height:20px;letter-spacing:0.379px"><span class="p">(</span><span class="s">'IT'</span><span class="p">,</span> <span class="s">'Sarah'</span><span class="p">),</span></span>
<span class="code" style="left:258px;top:412.5px;font-size:14px;line-height:20px;letter-spacing:0.379px"><span class="p">(</span><span class="s">'Finance'</span><span class="p">,</span> <span class="s">'Michael'</span><span class="p">),</span></span>
<span class="code" style="left:258px;top:432.5px;font-size:14px;line-height:20px;letter-spacing:0.379px"><span class="p">(</span><span class="s">'Marketing'</span><span class="p">,</span> <span class="s">'Anna'</span><span class="p">);</span></span>
<div class="b" style="left:207px;top:515px;width:559px;height:1px;background:#dde0e6"></div>
<div class="b" style="left:207px;top:516px;width:559px;height:32px;background:#fff"></div>
<div class="b" style="left:207px;top:547px;width:559px;height:1px;background:#dde0e6"></div>
<div class="b" style="left:302px;top:545px;width:83px;height:2px;background:#326690"></div>
<span class="t" style="left:216px;top:520px;font-size:14.7px;line-height:21px;color:#363636;font-family:'Liberation Sans', sans-serif;letter-spacing:-0.11px;">Data Output</span>
<span class="t" style="left:310px;top:520px;font-size:14.7px;line-height:21px;color:#326690;font-family:'Liberation Sans', sans-serif;letter-spacing:0.07px;">Messages</span>
<span class="t" style="left:394px;top:520px;font-size:14.7px;line-height:21px;color:#363636;font-family:'Liberation Sans', sans-serif;letter-spacing:0.31px;">Notifications</span>
<svg class="ic" style="left:737.2px;top:523.1px;width:16.4px;height:16.4px" viewBox="0 0 24 24"><path d="M5 19L19 5" stroke="#222" stroke-width="2.300" fill="none"/><path d="M21.500 2.500v9.300l-9.300-9.300zM2.500 21.500v-9.300l9.300 9.300z" fill="#222"/></svg>
<span class="t" style="left:218px;top:554.5px;font-size:12.5px;line-height:18px;color:#3d4148;font-family:'DejaVu Sans Mono', 'Liberation Mono', monospace;">INSERT 0 4</span>
<span class="t" style="left:218px;top:595.5px;font-size:12.5px;line-height:18px;color:#3d4148;font-family:'DejaVu Sans Mono', 'Liberation Mono', monospace;">Query returned successfully in 130 msec.</span>
<div class="b" style="left:207px;top:699px;width:559px;height:1px;background:#dde0e6"></div>
<div class="b" style="left:207px;top:700px;width:559px;height:21px;background:#ebeef3"></div>
<span class="t" style="left:220px;top:702px;font-size:14.7px;line-height:21px;color:#363636;font-family:'Liberation Sans', sans-serif;letter-spacing:0.05px;">Total rows: 1 of 1</span>
<span class="t" style="left:357px;top:702px;font-size:14.7px;line-height:21px;color:#363636;font-family:'Liberation Sans', sans-serif;letter-spacing:-0.02px;">Query complete 00:00:00.130</span>
<span class="t" style="left:574px;top:702px;font-size:14.7px;line-height:21px;color:#363636;font-family:'Liberation Sans', sans-serif;letter-spacing:-0.18px;">Ln 10, Col 24</span>
</body></html>
